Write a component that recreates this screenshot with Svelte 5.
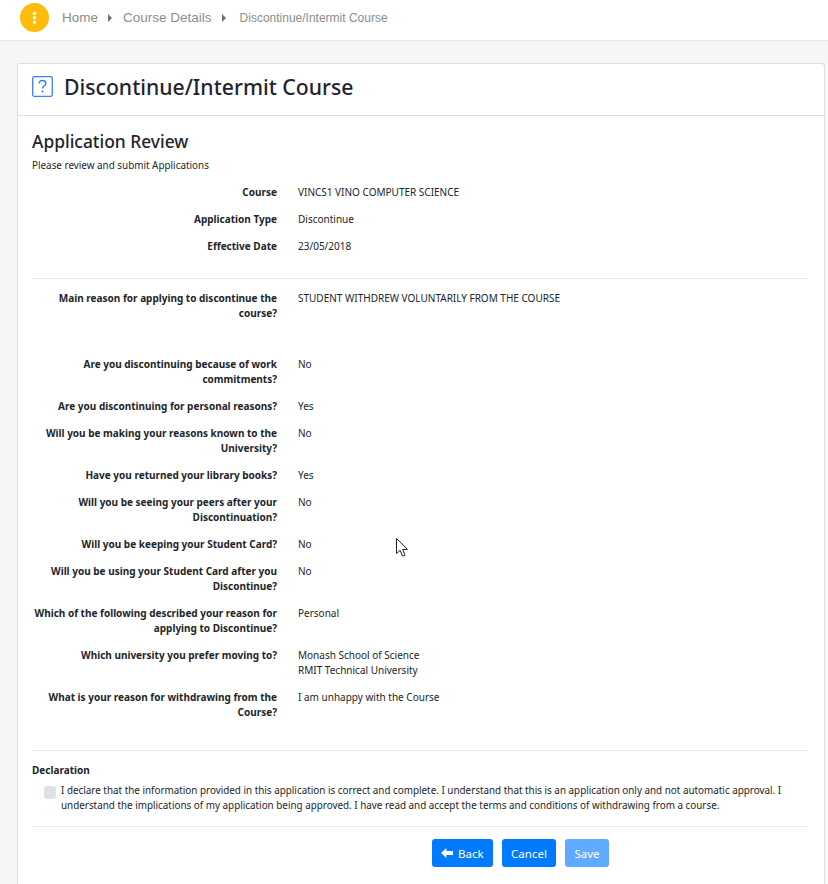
<script>
  const top = [
    ['Course', 'VINCS1 VINO COMPUTER SCIENCE'],
    ['Application Type', 'Discontinue'],
    ['Effective Date', '23/05/2018']
  ];
  const rows = [
    ['Are you discontinuing because of work commitments?', ['No']],
    ['Are you discontinuing for personal reasons?', ['Yes']],
    ['Will you be making your reasons known to the University?', ['No']],
    ['Have you returned your library books?', ['Yes']],
    ['Will you be seeing your peers after your Discontinuation?', ['No']],
    ['Will you be keeping your Student Card?', ['No']],
    ['Will you be using your Student Card after you Discontinue?', ['No']],
    ['Which of the following described your reason for applying to Discontinue?', ['Personal']],
    ['Which university you prefer moving to?', ['Monash School of Science', 'RMIT Technical University']],
    ['What is your reason for withdrawing from the Course?', ['I am unhappy with the Course']]
  ];
</script>

<header class="topbar">
  <span class="badge">
    <svg width="30" height="30" viewBox="0 0 30 30" aria-hidden="true">
      <circle cx="14.5" cy="14.5" r="14.5" fill="#ffbc0a" />
      <circle cx="14.5" cy="10.2" r="1.7" fill="#fff" />
      <circle cx="14.5" cy="14.7" r="1.7" fill="#fff" />
      <circle cx="14.5" cy="19.2" r="1.7" fill="#fff" />
    </svg>
  </span>
  <nav class="crumbs">
    <span>Home</span>
    <i class="caret"></i>
    <span>Course Details</span>
    <i class="caret second"></i>
    <span class="current">Discontinue/Intermit Course</span>
  </nav>
</header>

<main class="page">
  <section class="card">
    <div class="card-head">
      <svg class="help" width="21" height="21" viewBox="0 0 21 21" aria-hidden="true">
        <rect x="0.7" y="0.7" width="19.6" height="19.6" rx="1.5" fill="none" stroke="#3b82f6" stroke-width="1.3" />
        <path d="M7.2 7.6c0-2 1.4-3.1 3.3-3.1s3.3 1.1 3.3 2.9c0 2.5-3.3 2.6-3.3 5.2" fill="none" stroke="#2f7bf0" stroke-width="1.4" />
        <circle cx="10.5" cy="15.6" r="1" fill="#2f7bf0" />
      </svg>
      <h1>Discontinue/Intermit Course</h1>
    </div>
    <div class="card-body">
      <h2>Application Review</h2>
      <p class="sub">Please review and submit Applications</p>

      <div class="rows">
        {#each top as [label, value]}
          <div class="row">
            <div class="label">{label}</div>
            <div class="value">{value}</div>
          </div>
        {/each}
      </div>

      <hr class="first-rule" />

      <div class="rows">
        <div class="row lead">
          <div class="label">Main reason for applying to discontinue the course?</div>
          <div class="value">STUDENT WITHDREW VOLUNTARILY FROM THE COURSE</div>
        </div>
        {#each rows as [label, values]}
          <div class="row">
            <div class="label">{label}</div>
            <div class="value">
              {#each values as v}<div>{v}</div>{/each}
            </div>
          </div>
        {/each}
      </div>

      <hr class="second-rule" />

      <div class="decl-title">Declaration</div>
      <div class="decl">
        <span class="check"></span>
        <p>I declare that the information provided in this application is correct and complete. I understand that this is an application only and not automatic approval. I understand the implications of my application being approved. I have read and accept the terms and conditions of withdrawing from a course.</p>
      </div>

      <hr class="third-rule" />

      <div class="actions">
        <button class="btn">
          <svg width="12" height="10" viewBox="0 0 12 10" aria-hidden="true"><path d="M0 5 5.4 0v3H12v4H5.4v3z" fill="#fff" /></svg>
          Back
        </button>
        <button class="btn wide">Cancel</button>
        <button class="btn off">Save</button>
      </div>
    </div>
  </section>
</main>

<svg class="cursor" width="13" height="20" viewBox="0 0 13 20" aria-hidden="true">
  <path d="M.5.5v15l3.6-3.2 2.4 5.8 2.5-1-2.4-5.7h5z" fill="#fff" stroke="#222" stroke-width="1" />
</svg>

<style>
  :global(body) {
    margin: 0;
    background: #f6f6f6;
    font-family: "Noto Sans", "Open Sans", sans-serif;
    color: #212529;
  }
  .topbar {
    height: 40px;
    background: #fff;
    border-bottom: 1px solid #e8e8e8;
    display: flex;
    align-items: center;
    padding-left: 20px;
    gap: 12px;
  }
  .badge { display: flex; margin-top: -4px; }
  .crumbs {
    display: flex;
    align-items: center;
    font-family: "Liberation Sans", Arial, sans-serif;
    font-size: 13.5px;
    color: #8d8d8d;
    margin-top: -5px;
  }
  .caret {
    width: 0;
    height: 0;
    border-left: 4px solid #6f6f6f;
    border-top: 4px solid transparent;
    border-bottom: 4px solid transparent;
    margin: 0 11px 0 10px;
  }
  .caret.second { margin-right: 14px; }
  .current { font-size: 12px; }
  .page { padding: 22px 0 0 17px; }
  .card {
    width: 808px;
    background: #fff;
    border: 1px solid #dedede;
    border-bottom: 0;
    border-radius: 3px 3px 0 0;
    box-sizing: border-box;
    height: 821px;
  }
  .card-head {
    height: 51px;
    display: flex;
    align-items: center;
    padding-left: 14px;
    gap: 11px;
    border-bottom: 1px solid #dedede;
  }
  .help { flex: none; margin-top: -6px; }
  h1 {
    margin: -5px 0 0;
    font-size: 21.2px;
    font-weight: 500;
    color: #1f2430;
    line-height: 1.2;
  }
  .card-body { padding: 15px 16px 0 14px; }
  h2 {
    margin: 0;
    font-size: 17.4px;
    font-weight: 500;
    line-height: 21px;
    color: #212529;
  }
  .sub {
    margin: 6px 0 13px;
    font-size: 9.9px;
    line-height: 14px;
  }
  .row {
    display: grid;
    grid-template-columns: 245px 1fr;
    column-gap: 21px;
    font-size: 10px;
    line-height: 15px;
    margin-bottom: 12px;
  }
  .row.lead { margin-bottom: 36px; }
  .label { font-weight: 700; text-align: right; }
  hr {
    border: 0;
    border-top: 1px solid #e9e9e9;
    margin: 0;
  }
  .first-rule { margin: 24px 0 12px; }
  .second-rule { margin: 30px 0 12px; }
  .third-rule { margin: 13px 0 0; }
  .decl-title {
    font-size: 10px;
    font-weight: 700;
    line-height: 15px;
    margin-bottom: 5px;
  }
  .decl {
    display: flex;
    gap: 5px;
    padding-left: 12px;
  }
  .check {
    flex: none;
    width: 12px;
    height: 13px;
    margin-top: 3px;
    border-radius: 3px;
    background: #dee2e6;
  }
  .decl p {
    margin: 0;
    font-size: 9.87px;
    line-height: 15px;
  }
  .actions {
    display: flex;
    gap: 9px;
    padding: 12px 0 0 400px;
  }
  .btn {
    display: flex;
    align-items: center;
    gap: 5px;
    height: 28px;
    padding: 0 9px;
    border: 0;
    border-radius: 3px;
    background: #007bff;
    color: #fff;
    font: inherit;
    font-size: 11.5px;
  }
  .btn.wide { padding: 0 9.5px; }
  .btn.off { background: #5fabff; }
  .cursor { position: absolute; left: 396px; top: 538px; }
</style>
